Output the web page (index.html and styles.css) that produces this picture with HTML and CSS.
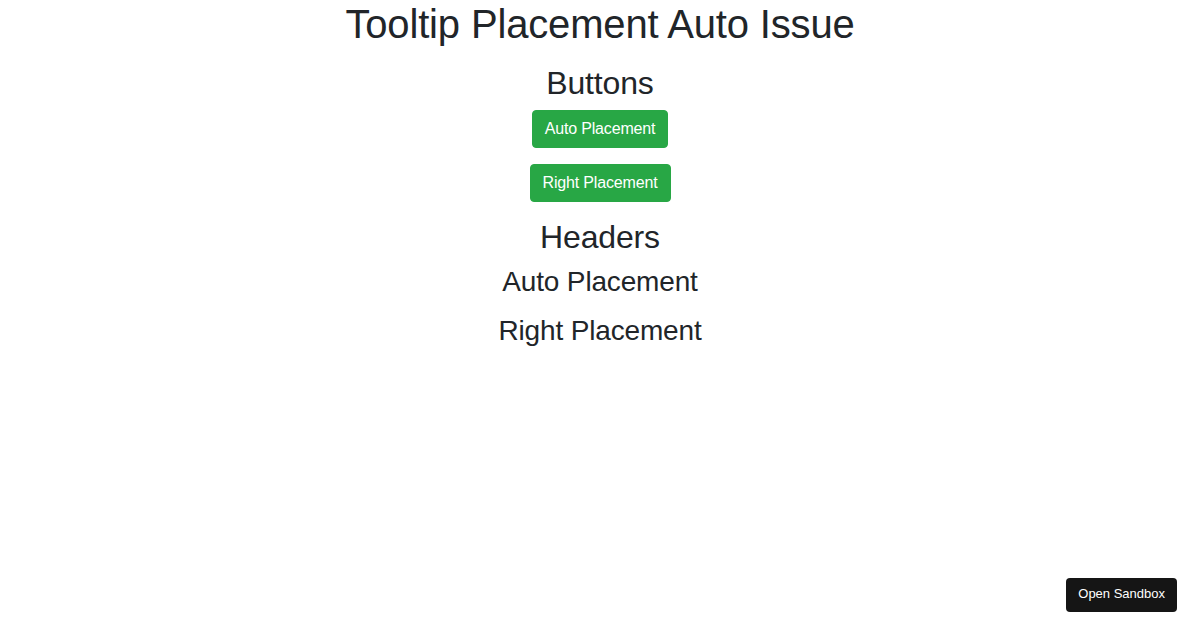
FILE: index.html
```html
<!DOCTYPE html>
<html lang="en">
<head>
    <meta charset="UTF-8">
    <meta name="viewport" content="width=device-width, initial-scale=1.0">
    <title>Tooltip Placement Auto Issue</title>
    <link rel="stylesheet" href="styles.css">
</head>
<body>

    <div class="app">
        <h1>Tooltip Placement Auto Issue</h1>

        <h2>Buttons</h2>
        <div class="btn-row">
            <button class="btn btn-success" title="Tooltip on auto">Auto Placement</button>
        </div>
        <div class="btn-row">
            <button class="btn btn-success" title="Tooltip on right">Right Placement</button>
        </div>

        <h2>Headers</h2>
        <div class="header-row">
            <h3 title="Tooltip on auto">Auto Placement</h3>
        </div>
        <div class="header-row">
            <h3 title="Tooltip on right">Right Placement</h3>
        </div>
    </div>

    <a class="sandbox-link" href="#">Open Sandbox</a>

</body>
</html>
```

FILE: styles.css
```css
body {
    font-family: 'Liberation Sans', Arial, sans-serif;
    color: #212529;
    background-color: #ffffff;
    margin: 0;
    padding: 0;
}

.app {
    text-align: center;
    letter-spacing: -0.01em;
}

h1, h2, h3 {
    font-weight: 400;
    line-height: 1.2;
    margin-top: 0;
}

h1 {
    font-size: 40px;
    margin-bottom: 16px;
}

h2 {
    font-size: 32px;
    margin-bottom: 8px;
}

h3 {
    font-size: 28px;
    margin-bottom: 8px;
}

.btn-row {
    margin-bottom: 16px;
}

.header-row {
    margin-bottom: 16px;
}

/* Bootstrap-like button */
.btn {
    display: inline-block;
    font-family: inherit;
    font-size: 16px;
    letter-spacing: inherit;
    line-height: 1.5;
    padding: 6px 12px;
    border: 1px solid transparent;
    border-radius: 4px;
    cursor: pointer;
}

.btn-success {
    color: #ffffff;
    background-color: #28a745;
    border-color: #28a745;
}

.btn-success:hover {
    background-color: #218838;
}

/* Sandbox overlay link */
.sandbox-link {
    position: fixed;
    right: 23px;
    bottom: 18px;
    padding: 8px 12px 10px;
    font-size: 13px;
    line-height: 16px;
    color: #ffffff;
    background-color: #151515;
    border-radius: 4px;
    text-decoration: none;
}
```
